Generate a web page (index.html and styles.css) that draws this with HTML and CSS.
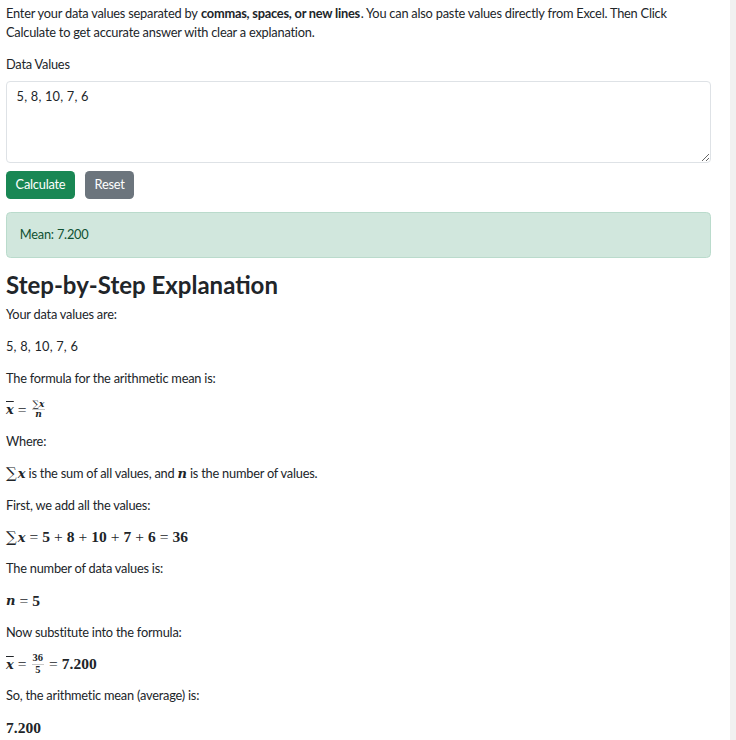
FILE: index.html
```html
<!DOCTYPE html>
<html lang="en">
<head>
<meta charset="utf-8">
<title>Mean Calculator</title>
<link rel="stylesheet" href="styles.css">
</head>
<body>
<div class="page">
  <main class="main">
    <p class="intro">Enter your data values separated by <strong>commas, spaces, or new lines</strong>. You can also paste values directly from Excel. Then Click<br>Calculate to get accurate answer with clear a explanation.</p>
    <label class="form-label" for="data">Data Values</label>
    <textarea id="data" class="form-control">5, 8, 10, 7, 6</textarea>
    <div class="actions">
      <button class="btn btn-calc" type="button">Calculate</button>
      <button class="btn btn-reset" type="button">Reset</button>
    </div>
    <div class="alert">Mean: 7.200</div>
    <h2 class="title">Step-by-Step Explanation</h2>
    <p>Your data values are:</p>
    <p class="digits">5, 8, 10, 7, 6</p>
    <p>The formula for the arithmetic mean is:</p>
    <p class="math-line"><span class="m"><span class="v bar">x</span><span class="op">=</span><span class="frac"><span class="num"><span class="sig">∑</span><span class="v">x</span></span><span class="den"><span class="v">n</span></span></span></span></p>
    <p>Where:</p>
    <p class="mixed"><span class="m"><span class="sig-big">∑</span><span class="v">x</span></span><span class="t">&nbsp;is the sum of all values, and&nbsp;</span><span class="m"><span class="v">n</span></span><span class="t">&nbsp;is the number of values.</span></p>
    <p>First, we add all the values:</p>
    <p class="math-line"><span class="m"><span class="sig-big">∑</span><span class="v">x</span><span class="op">=</span><span class="n">5</span><span class="op">+</span><span class="n">8</span><span class="op">+</span><span class="n">10</span><span class="op">+</span><span class="n">7</span><span class="op">+</span><span class="n">6</span><span class="op">=</span><span class="n">36</span></span></p>
    <p>The number of data values is:</p>
    <p class="math-line"><span class="m"><span class="v">n</span><span class="op">=</span><span class="n">5</span></span></p>
    <p>Now substitute into the formula:</p>
    <p class="math-line"><span class="m"><span class="v bar">x</span><span class="op">=</span><span class="frac"><span class="num"><span class="n">36</span></span><span class="den"><span class="n">5</span></span></span><span class="op">=</span><span class="n">7.200</span></span></p>
    <p>So, the arithmetic mean (average) is:</p>
    <p class="math-line"><span class="m"><span class="n">7.200</span></span></p>
  </main>
  <div class="strip"></div>
</div>
</body>
</html>
```
FILE: styles.css
```css
html, body {
  margin: 0;
  padding: 0;
  background: #ffffff;
}
body {
  font-family: Lato, "Open Sans", "Liberation Sans", sans-serif;
  font-size: 12.8px;
  line-height: 19.2px;
  color: #212529;
  letter-spacing: -0.22px;
}
.page {
  display: flex;
  min-height: 740px;
}
.main {
  flex: 1;
  padding: 4px 19px 0 6px;
  overflow: hidden;
}
.strip {
  width: 6px;
  background: #f1f1f1;
}
p {
  margin: 0 0 12.6px 0;
  height: 19.2px;
  white-space: nowrap;
}
.intro {
  height: auto;
  white-space: normal;
  margin-bottom: 12.8px;
}
.intro strong {
  font-weight: 700;
  margin: 0 0.6px;
}
.digits {
  letter-spacing: 0.2px;
}
.mixed {
  display: flex;
  align-items: center;
}
.form-label {
  display: block;
  margin-bottom: 6.4px;
}
.form-control {
  display: block;
  box-sizing: border-box;
  width: 100%;
  height: 82px;
  padding: 4.8px 9.6px;
  border: 0.8px solid #dee2e6;
  border-radius: 4px;
  font: inherit;
  letter-spacing: 0.2px;
  color: #212529;
  resize: vertical;
  margin: 0;
}
.actions {
  display: flex;
  gap: 10px;
  margin-top: 8px;
}
.btn {
  font: inherit;
  letter-spacing: -0.22px;
  color: #fff;
  border: 0;
  border-radius: 4.5px;
  height: 28px;
  padding: 0 9.6px;
  cursor: pointer;
}
.btn-calc {
  background: #198754;
}
.btn-reset {
  background: #6c757d;
}
.alert {
  margin-top: 12.8px;
  margin-bottom: 12.8px;
  padding: 12.8px;
  background: #d1e7dd;
  border: 0.8px solid #badbcc;
  border-radius: 4.5px;
  color: #0f5132;
}
.title {
  margin: 0 0 5px 0;
  font-size: 24px;
  line-height: 28.8px;
  font-weight: 700;
  color: #212529;
  letter-spacing: 0;
}
.math-line {
  display: flex;
  align-items: center;
}
.m {
  font-family: "DejaVu Serif", "Liberation Serif", serif;
  font-weight: 700;
  font-size: 13px;
  letter-spacing: 0;
  display: inline-flex;
  align-items: center;
  color: #212529;
  line-height: 1;
}
.v {
  font-style: italic;
}
.n {
  font-family: "Liberation Serif", serif;
  font-size: 15.5px;
}
.op {
  font-family: "Liberation Serif", serif;
  font-weight: 400;
  font-size: 15.5px;
  padding: 0 4px;
}
.bar {
  text-decoration: overline;
  text-decoration-thickness: 1px;
}
.sig-big {
  font-family: "DejaVu Serif", serif;
  font-weight: 400;
  font-size: 15px;
  margin-right: 1px;
}
.frac {
  display: inline-flex;
  flex-direction: column;
  align-items: center;
  font-size: 9px;
  line-height: 9.5px;
  padding: 0 1px;
}
.frac .n {
  font-size: 10.5px;
}
.num {
  border-bottom: 0.6px solid #c8c8c8;
  padding: 0 1px;
}
.sig {
  font-family: "DejaVu Serif", serif;
  font-weight: 400;
}
```
